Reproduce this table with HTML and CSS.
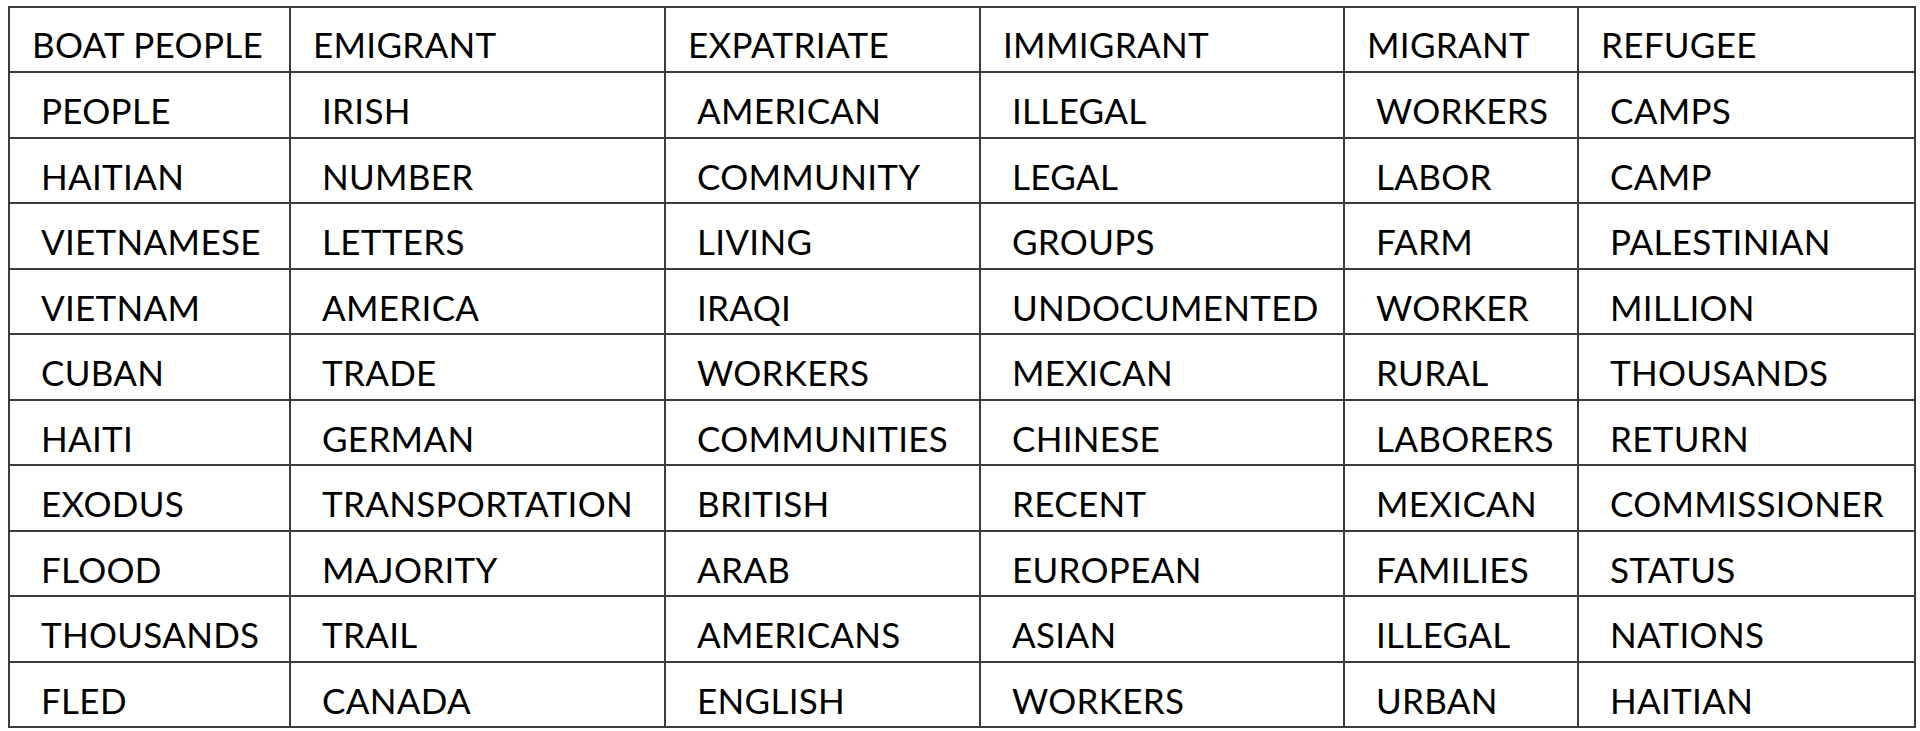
FILE: index.html
```html
<!DOCTYPE html>
<html lang="en">
<head>
<meta charset="utf-8">
<title>Word associations</title>
<link rel="stylesheet" href="styles.css">
</head>
<body>
<table class="words">
  <colgroup>
    <col class="c1"><col class="c2"><col class="c3"><col class="c4"><col class="c5"><col class="c6">
  </colgroup>
  <thead>
    <tr class="head">
      <th>BOAT PEOPLE</th><th>EMIGRANT</th><th>EXPATRIATE</th><th>IMMIGRANT</th><th>MIGRANT</th><th>REFUGEE</th>
    </tr>
  </thead>
  <tbody>
    <tr><td>PEOPLE</td><td>IRISH</td><td>AMERICAN</td><td>ILLEGAL</td><td>WORKERS</td><td>CAMPS</td></tr>
    <tr><td>HAITIAN</td><td>NUMBER</td><td>COMMUNITY</td><td>LEGAL</td><td>LABOR</td><td>CAMP</td></tr>
    <tr><td>VIETNAMESE</td><td>LETTERS</td><td>LIVING</td><td>GROUPS</td><td>FARM</td><td>PALESTINIAN</td></tr>
    <tr><td>VIETNAM</td><td>AMERICA</td><td>IRAQI</td><td>UNDOCUMENTED</td><td>WORKER</td><td>MILLION</td></tr>
    <tr><td>CUBAN</td><td>TRADE</td><td>WORKERS</td><td>MEXICAN</td><td>RURAL</td><td>THOUSANDS</td></tr>
    <tr><td>HAITI</td><td>GERMAN</td><td>COMMUNITIES</td><td>CHINESE</td><td>LABORERS</td><td>RETURN</td></tr>
    <tr><td>EXODUS</td><td>TRANSPORTATION</td><td>BRITISH</td><td>RECENT</td><td>MEXICAN</td><td>COMMISSIONER</td></tr>
    <tr><td>FLOOD</td><td>MAJORITY</td><td>ARAB</td><td>EUROPEAN</td><td>FAMILIES</td><td>STATUS</td></tr>
    <tr><td>THOUSANDS</td><td>TRAIL</td><td>AMERICANS</td><td>ASIAN</td><td>ILLEGAL</td><td>NATIONS</td></tr>
    <tr><td>FLED</td><td>CANADA</td><td>ENGLISH</td><td>WORKERS</td><td>URBAN</td><td>HAITIAN</td></tr>
  </tbody>
</table>
</body>
</html>
```
FILE: styles.css
```css
html, body {
  margin: 0;
  padding: 0;
  background: #ffffff;
}

body {
  padding: 6px 0 0 8px;
  font-family: Lato, "Open Sans", "Liberation Sans", sans-serif;
  color: #000000;
}

.words {
  border-collapse: collapse;
  table-layout: fixed;
  width: 1906px;
  border: 2px solid #8a8a8a;
}

.c1 { width: 281px; }
.c2 { width: 375px; }
.c3 { width: 315px; }
.c4 { width: 364px; }
.c5 { width: 234px; }
.c6 { width: 337px; }

.words th,
.words td {
  border: 2px solid #3c3c3c;
  font-size: 35px;
  line-height: 35px;
  letter-spacing: 0.3px;
  font-weight: 400;
  text-align: left;
  white-space: nowrap;
  vertical-align: top;
  overflow: hidden;
}

.words th {
  height: 65px;
  padding: 19px 0 0 22px;
  box-sizing: border-box;
}

.words td {
  height: 65.5px;
  padding: 20px 0 0 31px;
  box-sizing: border-box;
}
```
